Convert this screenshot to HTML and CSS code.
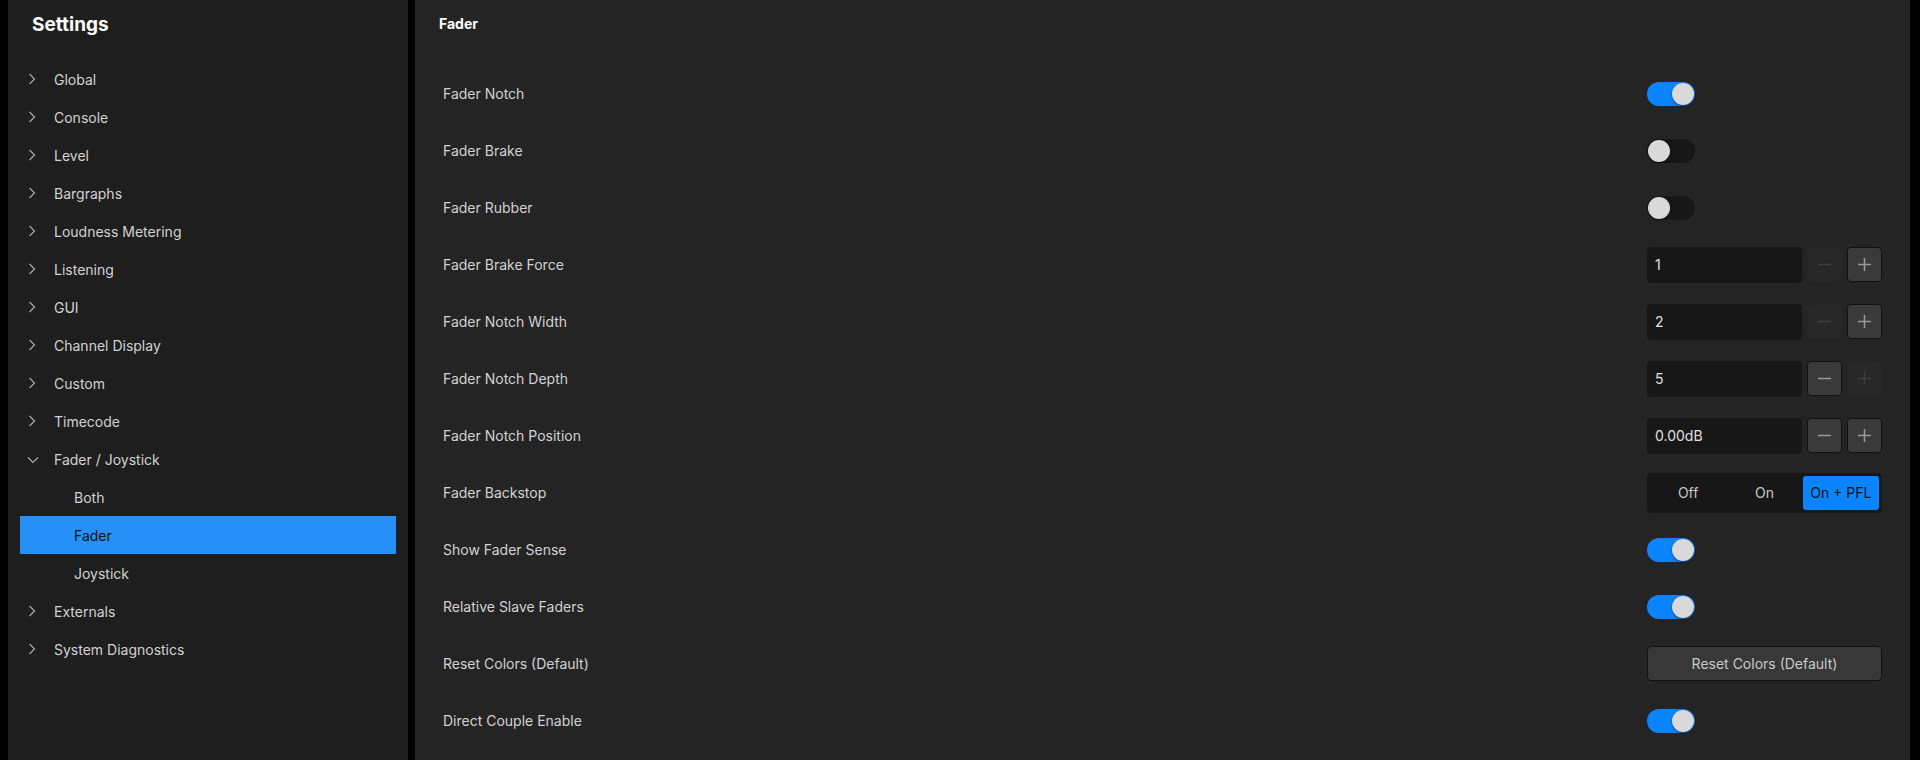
FILE: index.html
```html
<!DOCTYPE html>
<html>
<head>
    <meta charset="utf-8">
    <title>Settings - Fader</title>
    <link rel="stylesheet" href="styles.css">
</head>
<body>
    <aside class="sidebar">
        <h1 class="sidebar-title">Settings</h1>
        <ul class="nav">
            <li class="nav-item"><svg class="chev" viewBox="0 0 8 12"><polyline points="1.5,1 6.5,6 1.5,11"/></svg>Global</li>
            <li class="nav-item"><svg class="chev" viewBox="0 0 8 12"><polyline points="1.5,1 6.5,6 1.5,11"/></svg>Console</li>
            <li class="nav-item"><svg class="chev" viewBox="0 0 8 12"><polyline points="1.5,1 6.5,6 1.5,11"/></svg>Level</li>
            <li class="nav-item"><svg class="chev" viewBox="0 0 8 12"><polyline points="1.5,1 6.5,6 1.5,11"/></svg>Bargraphs</li>
            <li class="nav-item"><svg class="chev" viewBox="0 0 8 12"><polyline points="1.5,1 6.5,6 1.5,11"/></svg>Loudness Metering</li>
            <li class="nav-item"><svg class="chev" viewBox="0 0 8 12"><polyline points="1.5,1 6.5,6 1.5,11"/></svg>Listening</li>
            <li class="nav-item"><svg class="chev" viewBox="0 0 8 12"><polyline points="1.5,1 6.5,6 1.5,11"/></svg>GUI</li>
            <li class="nav-item"><svg class="chev" viewBox="0 0 8 12"><polyline points="1.5,1 6.5,6 1.5,11"/></svg>Channel Display</li>
            <li class="nav-item"><svg class="chev" viewBox="0 0 8 12"><polyline points="1.5,1 6.5,6 1.5,11"/></svg>Custom</li>
            <li class="nav-item"><svg class="chev" viewBox="0 0 8 12"><polyline points="1.5,1 6.5,6 1.5,11"/></svg>Timecode</li>
            <li class="nav-item"><svg class="chev down" viewBox="0 0 12 8"><polyline points="1,1.5 6,6.5 11,1.5"/></svg>Fader / Joystick</li>
            <li class="nav-item sub">Both</li>
            <li class="nav-item sub active">Fader</li>
            <li class="nav-item sub">Joystick</li>
            <li class="nav-item"><svg class="chev" viewBox="0 0 8 12"><polyline points="1.5,1 6.5,6 1.5,11"/></svg>Externals</li>
            <li class="nav-item"><svg class="chev" viewBox="0 0 8 12"><polyline points="1.5,1 6.5,6 1.5,11"/></svg>System Diagnostics</li>
        </ul>
    </aside>

    <main class="panel">
        <h2 class="panel-title">Fader</h2>

        <div class="setting">
            <span class="label">Fader Notch</span>
            <div class="control"><span class="toggle on"><span class="knob"></span></span></div>
        </div>
        <div class="setting">
            <span class="label">Fader Brake</span>
            <div class="control"><span class="toggle"><span class="knob"></span></span></div>
        </div>
        <div class="setting">
            <span class="label">Fader Rubber</span>
            <div class="control"><span class="toggle"><span class="knob"></span></span></div>
        </div>
        <div class="setting">
            <span class="label">Fader Brake Force</span>
            <div class="control stepper">
                <span class="num">1</span>
                <span class="step disabled"><svg viewBox="0 0 13 13"><line x1="0" y1="6.5" x2="13" y2="6.5"/></svg></span>
                <span class="step"><svg viewBox="0 0 13 13"><line x1="0" y1="6.5" x2="13" y2="6.5"/><line x1="6.5" y1="0" x2="6.5" y2="13"/></svg></span>
            </div>
        </div>
        <div class="setting">
            <span class="label">Fader Notch Width</span>
            <div class="control stepper">
                <span class="num">2</span>
                <span class="step disabled"><svg viewBox="0 0 13 13"><line x1="0" y1="6.5" x2="13" y2="6.5"/></svg></span>
                <span class="step"><svg viewBox="0 0 13 13"><line x1="0" y1="6.5" x2="13" y2="6.5"/><line x1="6.5" y1="0" x2="6.5" y2="13"/></svg></span>
            </div>
        </div>
        <div class="setting">
            <span class="label">Fader Notch Depth</span>
            <div class="control stepper">
                <span class="num">5</span>
                <span class="step"><svg viewBox="0 0 13 13"><line x1="0" y1="6.5" x2="13" y2="6.5"/></svg></span>
                <span class="step disabled"><svg viewBox="0 0 13 13"><line x1="0" y1="6.5" x2="13" y2="6.5"/><line x1="6.5" y1="0" x2="6.5" y2="13"/></svg></span>
            </div>
        </div>
        <div class="setting">
            <span class="label">Fader Notch Position</span>
            <div class="control stepper">
                <span class="num">0.00dB</span>
                <span class="step"><svg viewBox="0 0 13 13"><line x1="0" y1="6.5" x2="13" y2="6.5"/></svg></span>
                <span class="step"><svg viewBox="0 0 13 13"><line x1="0" y1="6.5" x2="13" y2="6.5"/><line x1="6.5" y1="0" x2="6.5" y2="13"/></svg></span>
            </div>
        </div>
        <div class="setting">
            <span class="label">Fader Backstop</span>
            <div class="control segmented">
                <span class="seg">Off</span>
                <span class="seg">On</span>
                <span class="seg active">On + PFL</span>
            </div>
        </div>
        <div class="setting">
            <span class="label">Show Fader Sense</span>
            <div class="control"><span class="toggle on"><span class="knob"></span></span></div>
        </div>
        <div class="setting">
            <span class="label">Relative Slave Faders</span>
            <div class="control"><span class="toggle on"><span class="knob"></span></span></div>
        </div>
        <div class="setting">
            <span class="label">Reset Colors (Default)</span>
            <div class="control"><span class="button">Reset Colors (Default)</span></div>
        </div>
        <div class="setting">
            <span class="label">Direct Couple Enable</span>
            <div class="control"><span class="toggle on"><span class="knob"></span></span></div>
        </div>
    </main>
</body>
</html>
```

FILE: styles.css
```css
:root {
    --black: #000;
    --sidebar-bg: #1e1e1e;
    --panel-bg: #242424;
    --field-bg: #171717;
    --btn-bg: #3a3a3a;
    --text: #d2d2d2;
    --accent: #0a84ff;
    --select: #2590f8;
}

* {
    box-sizing: border-box;
}

body {
    margin: 0;
    height: 760px;
    overflow: hidden;
    display: flex;
    gap: 7px;
    padding: 0 10px 0 8px;
    background: var(--black);
    font-family: Inter, "Noto Sans", sans-serif;
    font-size: 14px;
    color: var(--text);
}

/* left navigation */
.sidebar {
    width: 400px;
    flex: none;
    background: var(--sidebar-bg);
}

.sidebar-title {
    margin: 0;
    height: 60px;
    padding: 13px 0 0 24px;
    font-size: 19px;
    font-weight: 700;
    color: #fff;
}

.nav {
    list-style: none;
    margin: 0;
    padding: 0 12px;
}

.nav-item {
    display: flex;
    align-items: center;
    height: 38px;
    padding-left: 34px;
    position: relative;
}

.nav-item.sub {
    padding-left: 54px;
}

.nav-item.active {
    background: var(--select);
    color: #111;
}

.chev {
    position: absolute;
    left: 8px;
    top: 13px;
    width: 8px;
    height: 12px;
    fill: none;
    stroke: #a8a8a8;
    stroke-width: 1.2;
}

.chev.down {
    left: 7px;
    top: 16px;
    width: 12px;
    height: 8px;
}

/* right panel */
.panel {
    flex: 1;
    background: var(--panel-bg);
    padding: 0 28px;
}

.panel-title {
    margin: 0 0 0 -4px;
    height: 65px;
    padding-top: 15px;
    font-size: 14px;
    font-weight: 700;
    color: #fff;
}

.setting {
    display: flex;
    align-items: center;
    justify-content: space-between;
    height: 57px;
}

.control {
    width: 235px;
    display: flex;
    align-items: center;
}

.toggle {
    width: 48px;
    height: 24px;
    border-radius: 12px;
    background: var(--field-bg);
    position: relative;
}

.toggle.on {
    background: var(--accent);
}

.knob {
    position: absolute;
    top: 1px;
    left: 1px;
    width: 22px;
    height: 22px;
    border-radius: 50%;
    background: #d9d9d9;
    box-shadow: 0 1px 2px rgba(0, 0, 0, 0.5);
}

.toggle.on .knob {
    left: 25px;
}

.stepper {
    gap: 5px;
}

.num {
    width: 155px;
    height: 36px;
    background: var(--field-bg);
    border-radius: 4px;
    display: flex;
    align-items: center;
    padding-left: 8px;
    color: #e0e0e0;
}

.step {
    width: 35px;
    height: 35px;
    border-radius: 4px;
    background: var(--btn-bg);
    border: 1px solid #111;
    display: flex;
    align-items: center;
    justify-content: center;
}

.step svg {
    width: 13px;
    height: 13px;
    stroke: #9a9a9a;
    stroke-width: 1.5;
}

.step.disabled {
    background: #282828;
    border-color: #262626;
}

.step.disabled svg {
    stroke: #3c3c3c;
}

.segmented {
    height: 40px;
    background: var(--field-bg);
    border-radius: 4px;
    padding: 3px;
}

.seg {
    flex: 1;
    height: 100%;
    display: flex;
    align-items: center;
    justify-content: center;
    border-radius: 3px;
    color: #c8c8c8;
}

.seg.active {
    background: var(--accent);
    color: #111;
}

.button {
    width: 235px;
    height: 35px;
    border-radius: 4px;
    background: #383838;
    border: 1px solid #111;
    display: flex;
    align-items: center;
    justify-content: center;
    color: #c8c8c8;
}
```
